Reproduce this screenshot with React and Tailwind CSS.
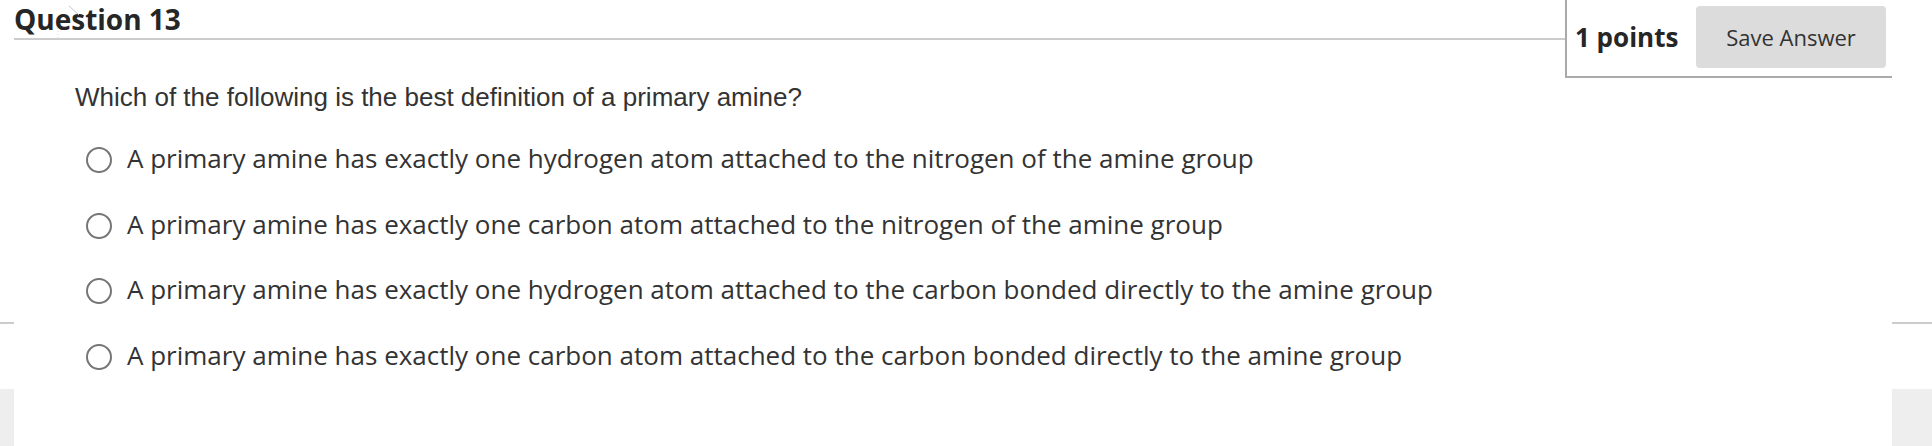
import React from "react";

const options = [
  "A primary amine has exactly one hydrogen atom attached to the nitrogen of the amine group",
  "A primary amine has exactly one carbon atom attached to the nitrogen of the amine group",
  "A primary amine has exactly one hydrogen atom attached to the carbon bonded directly to the amine group",
  "A primary amine has exactly one carbon atom attached to the carbon bonded directly to the amine group",
];

export default function App() {
  return (
    <div className="relative w-[1932px] h-[446px] bg-white overflow-hidden flex text-[#333333] [font-family:'Open_Sans',sans-serif]">
      <div className="flex flex-col shrink-0 w-[14px]">
        <div className="h-[322px] bg-white" />
        <div className="h-[2px] bg-[#cccccc]" />
        <div className="h-[65px] bg-white" />
        <div className="flex-1 bg-[#eeeeee]" />
      </div>

      <div className="flex-1 min-w-0 flex flex-col">
        {/* header */}
        <div className="flex items-start -mr-[4px]">
          <div className="flex-1 h-[40px] border-b-2 border-[#cccccc] relative">
            <h2 className="absolute left-0 top-0 text-[28px] font-bold leading-[38px] text-[#262626] whitespace-nowrap">
              Question 13
            </h2>
            <svg className="absolute left-[20px] top-0" width="60" height="40" viewBox="0 0 60 40">
              <line x1="35" y1="6" x2="45" y2="15" stroke="#c8c8c8" strokeWidth="1" />
              <line x1="24" y1="28" x2="24" y2="38" stroke="#d8d8d8" strokeWidth="1" strokeDasharray="1 2" />
            </svg>
          </div>
          <div className="w-[331px] h-[78px] border-l-2 border-r-2 border-b-2 border-[#aaaaaa] flex items-start pl-[8px] pr-[8px] pt-[6px]">
            <div className="h-[62px] flex items-center text-[26px] font-bold text-[#262626] whitespace-nowrap">
              1 points
            </div>
            <div className="ml-auto w-[190px] h-[62px] bg-[#dcdcdc] rounded-[4px] flex items-center justify-center text-[22px] text-[#333333]">
              Save Answer
            </div>
          </div>
        </div>

        {/* question */}
        <div className="mt-[4px] pl-[61px]">
          <p className="text-[26px] leading-[30px] text-[#333333] [font-family:'Liberation_Sans',Arial,sans-serif] whitespace-nowrap">
            Which of the following is the best definition of a primary amine?
          </p>
          <div className="mt-[28px] pl-[11px] flex flex-col gap-[29.67px]">
            {options.map((o, i) => (
              <label key={i} className="flex items-start h-[36px] gap-[15px]">
                <span className="mt-[7px] w-[26px] h-[26px] rounded-full border-2 border-[#767676] bg-white shrink-0" />
                <span className="text-[26px] leading-[36px] text-[#333333] whitespace-nowrap">{o}</span>
              </label>
            ))}
          </div>
        </div>
      </div>

      <div className="flex flex-col shrink-0 w-[40px]">
        <div className="h-[322px] bg-white" />
        <div className="h-[2px] bg-[#cccccc]" />
        <div className="h-[65px] bg-white" />
        <div className="flex-1 bg-[#eeeeee]" />
      </div>
    </div>
  );
}
